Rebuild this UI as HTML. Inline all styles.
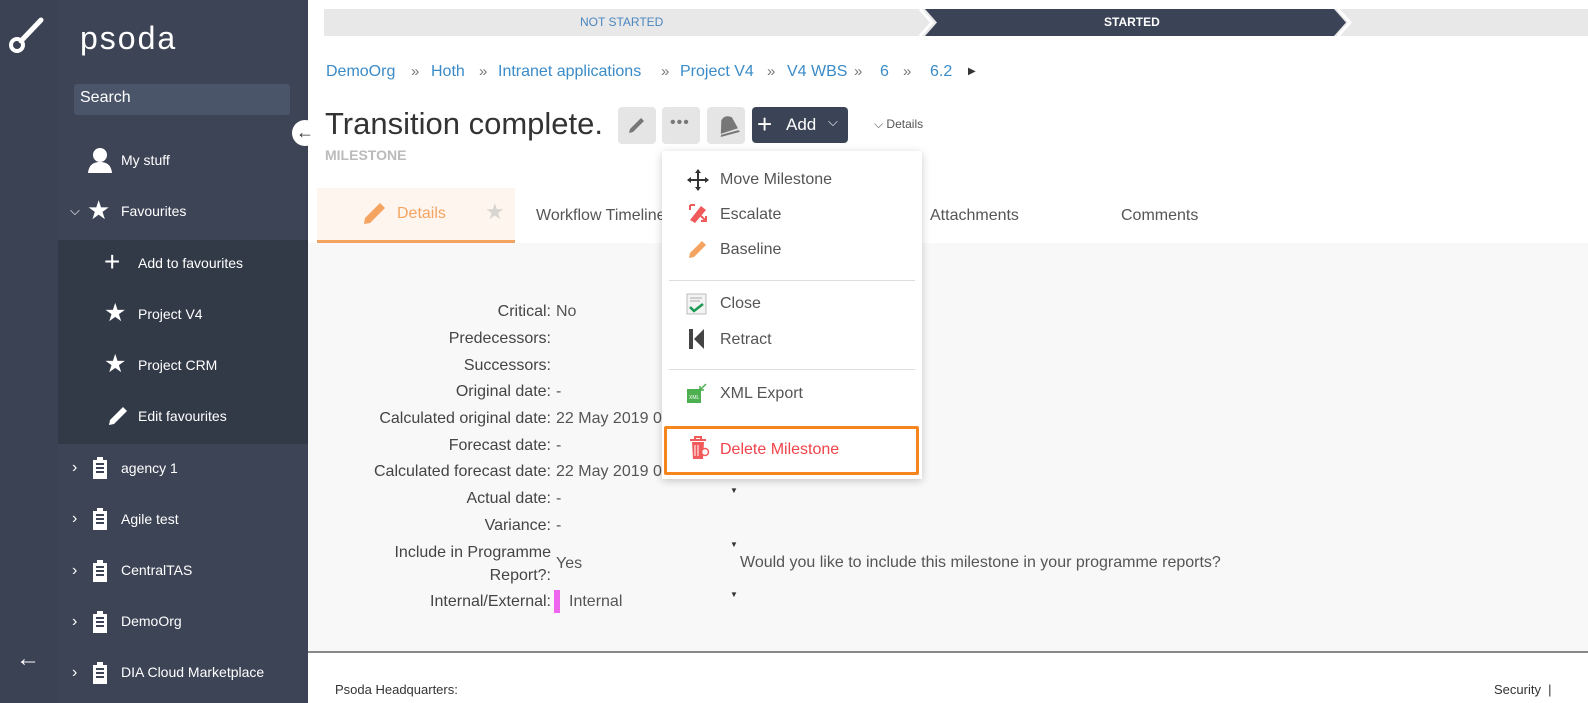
<!DOCTYPE html>
<html><head><meta charset="utf-8"><style>
*{margin:0;padding:0;box-sizing:border-box}
body{width:1588px;height:703px;overflow:hidden;position:relative;background:#fff;font-family:"Liberation Sans",sans-serif;color:#444}
.a{position:absolute;white-space:nowrap}
#strip{left:0;top:0;width:58px;height:703px;background:#3b4253}
#nav{left:58px;top:0;width:250px;height:703px;background:#3d4456}
#fav{left:58px;top:240px;width:250px;height:204px;background:#333a47}
.ni{color:#fff;font-size:14px}
.ico{fill:#fff}
#content{left:308px;top:243px;width:1280px;height:410px;background:#f8f8f8;border-bottom:2px solid #888}
.lbl{font-size:16px;color:#444;text-align:right;width:300px;left:251px}
.val{font-size:16px;color:#555;left:556px}
.mi{font-size:16px;color:#555;left:720px}
.crumb{color:#3a8bc8;font-size:16px;top:63px}
.sep{color:#777;font-size:15px;top:63px}
.btn{top:107px;width:38px;height:37px;background:#e5e5e5;border-radius:4px}
</style></head><body>
<div class="a" id="strip"></div>
<div class="a" id="nav"></div>
<div class="a" id="fav"></div>
<svg class="a" style="left:8px;top:12px" width="40" height="42" viewBox="0 0 40 42"><circle cx="9" cy="33" r="6" fill="none" stroke="#fff" stroke-width="4"/><line x1="13" y1="29" x2="33" y2="8" stroke="#fff" stroke-width="5" stroke-linecap="round"/><circle cx="9" cy="33" r="2" fill="#3b4253"/></svg>
<div class="a" style="left:80px;top:20px;color:#fff;font-size:32px;letter-spacing:2px;font-weight:300">psoda</div>
<div class="a" style="left:74px;top:84px;width:216px;height:31px;background:#4b5569;border-radius:3px;color:#fff;font-size:16px;padding:5px 6px">Search</div>
<div class="a" style="left:292px;top:120px;width:26px;height:26px;border-radius:13px;background:#fff;color:#333;font-size:18px;line-height:24px;text-align:center">←</div>
<svg class="a" style="left:88px;top:147px" width="24" height="26" viewBox="0 0 24 26"><circle cx="12" cy="8" r="7" class="ico"/><path d="M0 26 Q1 15 12 15 Q23 15 24 26Z" class="ico"/></svg>
<div class="a ni" style="left:121px;top:152px">My stuff</div>
<div class="a ni" style="left:70px;top:203px;font-size:13px">⌵</div>
<div class="a" style="left:87px;top:195px;color:#fff;font-size:26px">★</div>
<div class="a ni" style="left:121px;top:203px">Favourites</div>
<div class="a" style="left:104px;top:246px;color:#fff;font-size:28px">+</div>
<div class="a ni" style="left:138px;top:255px">Add to favourites</div>
<div class="a" style="left:104px;top:298px;color:#fff;font-size:25px">★</div>
<div class="a ni" style="left:138px;top:306px">Project V4</div>
<div class="a" style="left:104px;top:349px;color:#fff;font-size:25px">★</div>
<div class="a ni" style="left:138px;top:357px">Project CRM</div>
<svg class="a" style="left:106px;top:404px" width="24" height="24" viewBox="0 0 24 24"><path d="M3 21 L4 16 L17 3 L21 7 L8 20Z" class="ico"/></svg>
<div class="a ni" style="left:138px;top:408px">Edit favourites</div>
<div class="a" style="left:16px;top:645px;color:#fff;font-size:24px">←</div>
<div class="a ni" style="left:72px;top:459px;font-size:16px">›</div>
<svg class="a" style="left:92px;top:457px" width="16" height="22" viewBox="0 0 16 22"><rect x="1" y="3" width="14" height="19" class="ico"/><rect x="5" y="0" width="6" height="3" class="ico"/><g fill="#3d4456"><rect x="4" y="6" width="8" height="2"/><rect x="4" y="10" width="8" height="2"/><rect x="4" y="14" width="8" height="2"/></g></svg>
<div class="a ni" style="left:121px;top:460px">agency 1</div>
<div class="a ni" style="left:72px;top:510px;font-size:16px">›</div>
<svg class="a" style="left:92px;top:508px" width="16" height="22" viewBox="0 0 16 22"><rect x="1" y="3" width="14" height="19" class="ico"/><rect x="5" y="0" width="6" height="3" class="ico"/><g fill="#3d4456"><rect x="4" y="6" width="8" height="2"/><rect x="4" y="10" width="8" height="2"/><rect x="4" y="14" width="8" height="2"/></g></svg>
<div class="a ni" style="left:121px;top:511px">Agile test</div>
<div class="a ni" style="left:72px;top:562px;font-size:16px">›</div>
<svg class="a" style="left:92px;top:560px" width="16" height="22" viewBox="0 0 16 22"><rect x="1" y="3" width="14" height="19" class="ico"/><rect x="5" y="0" width="6" height="3" class="ico"/><g fill="#3d4456"><rect x="4" y="6" width="8" height="2"/><rect x="4" y="10" width="8" height="2"/><rect x="4" y="14" width="8" height="2"/></g></svg>
<div class="a ni" style="left:121px;top:562px">CentralTAS</div>
<div class="a ni" style="left:72px;top:613px;font-size:16px">›</div>
<svg class="a" style="left:92px;top:611px" width="16" height="22" viewBox="0 0 16 22"><rect x="1" y="3" width="14" height="19" class="ico"/><rect x="5" y="0" width="6" height="3" class="ico"/><g fill="#3d4456"><rect x="4" y="6" width="8" height="2"/><rect x="4" y="10" width="8" height="2"/><rect x="4" y="14" width="8" height="2"/></g></svg>
<div class="a ni" style="left:121px;top:613px">DemoOrg</div>
<div class="a ni" style="left:72px;top:664px;font-size:16px">›</div>
<svg class="a" style="left:92px;top:662px" width="16" height="22" viewBox="0 0 16 22"><rect x="1" y="3" width="14" height="19" class="ico"/><rect x="5" y="0" width="6" height="3" class="ico"/><g fill="#3d4456"><rect x="4" y="6" width="8" height="2"/><rect x="4" y="10" width="8" height="2"/><rect x="4" y="14" width="8" height="2"/></g></svg>
<div class="a ni" style="left:121px;top:664px">DIA Cloud Marketplace</div>

<svg class="a" style="left:324px;top:9px" width="1264" height="27" viewBox="0 0 1264 27">
<rect x="0" y="0" width="1264" height="27" fill="#e8e8e8"/>
<polygon points="601,0 1010,0 1022,13.5 1010,27 601,27 613,13.5" fill="#3b4356"/>
<polyline points="596,0 608,13.5 596,27" fill="none" stroke="#fff" stroke-width="3"/>
<polyline points="1014,0 1026,13.5 1014,27" fill="none" stroke="#fff" stroke-width="3"/>
</svg>
<div class="a" style="left:580px;top:15px;font-size:12px;color:#4a86c0">NOT STARTED</div>
<div class="a" style="left:1104px;top:15px;font-size:12px;color:#fff;font-weight:bold">STARTED</div>

<div class="a crumb" style="left:326px">DemoOrg</div><div class="a sep" style="left:411px">»</div>
<div class="a crumb" style="left:431px">Hoth</div><div class="a sep" style="left:479px">»</div>
<div class="a crumb" style="left:498px">Intranet applications</div><div class="a sep" style="left:661px">»</div>
<div class="a crumb" style="left:680px">Project V4</div><div class="a sep" style="left:767px">»</div>
<div class="a crumb" style="left:787px">V4 WBS</div><div class="a sep" style="left:854px">»</div>
<div class="a crumb" style="left:880px">6</div><div class="a sep" style="left:903px">»</div>
<div class="a crumb" style="left:930px">6.2</div>
<div class="a" style="left:968px;top:66px;font-size:10px;color:#333">▶</div>

<div class="a" style="left:325px;top:106px;font-size:31px;color:#333">Transition complete.</div>
<div class="a" style="left:325px;top:147px;font-size:14px;color:#bbb;font-weight:bold">MILESTONE</div>
<div class="a btn" style="left:618px"></div>
<svg class="a" style="left:627px;top:115px" width="20" height="20" viewBox="0 0 20 20"><path d="M2 18 L3 14 L14 3 L17 6 L6 17Z" fill="#777"/></svg>
<div class="a btn" style="left:662px"></div>
<div class="a" style="left:670px;top:114px;font-size:16px;color:#777;letter-spacing:1px">•••</div>
<div class="a btn" style="left:707px"></div>
<svg class="a" style="left:713px;top:112px" width="28" height="28" viewBox="0 0 28 28"><path d="M6 20 L10 7 Q15 2 21 7 L24 19Z M6 21 L24 21 L25 23 L5 23Z" fill="#777" transform="rotate(-15 14 14)"/></svg>
<div class="a" style="left:752px;top:107px;width:96px;height:36px;background:#3b4356;border-radius:4px"></div>
<div class="a" style="left:757px;top:109px;font-size:26px;color:#fff">+</div>
<div class="a" style="left:786px;top:115px;font-size:17px;color:#fff">Add</div>
<div class="a" style="left:828px;top:114px;font-size:13px;color:#fff">⌵</div>
<div class="a" style="left:874px;top:117px;font-size:12px;color:#555">⌵ Details</div>

<div class="a" style="left:308px;top:185px;width:1280px;height:58px;background:#fff;box-shadow:0 2px 3px rgba(0,0,0,.12)"></div>
<div class="a" style="left:317px;top:188px;width:198px;height:55px;background:#fff5ef;border-bottom:3px solid #f4a460"></div>
<svg class="a" style="left:362px;top:200px" width="26" height="26" viewBox="0 0 26 26"><path d="M2 24 L3 18 L18 3 L23 8 L8 23Z" fill="#f4a460"/></svg>
<div class="a" style="left:397px;top:205px;font-size:16px;color:#f4a460">Details</div>
<div class="a" style="left:485px;top:199px;font-size:22px;color:#d8d4d0">★</div>
<div class="a" style="left:536px;top:207px;font-size:16px;color:#555">Workflow Timeline</div>
<div class="a" style="left:930px;top:207px;font-size:16px;color:#555">Attachments</div>
<div class="a" style="left:1121px;top:207px;font-size:16px;color:#555">Comments</div>

<div class="a" id="content"></div>
<div class="a lbl" style="top:303px">Critical:</div><div class="a val" style="top:303px">No</div>
<div class="a lbl" style="top:330px">Predecessors:</div>
<div class="a lbl" style="top:357px">Successors:</div>
<div class="a lbl" style="top:383px">Original date:</div><div class="a val" style="top:383px">-</div>
<div class="a lbl" style="top:410px">Calculated original date:</div><div class="a val" style="top:410px">22 May 2019 0</div>
<div class="a lbl" style="top:437px">Forecast date:</div><div class="a val" style="top:437px">-</div>
<div class="a lbl" style="top:463px">Calculated forecast date:</div><div class="a val" style="top:463px">22 May 2019 0</div>
<div class="a lbl" style="top:490px">Actual date:</div><div class="a val" style="top:490px">-</div>
<div class="a lbl" style="top:517px">Variance:</div><div class="a val" style="top:517px">-</div>
<div class="a lbl" style="top:544px">Include in Programme</div>
<div class="a lbl" style="top:567px">Report?:</div><div class="a val" style="top:555px">Yes</div>
<div class="a lbl" style="top:593px">Internal/External:</div>
<div class="a" style="left:554px;top:590px;width:6px;height:23px;background:#ee66ee"></div>
<div class="a val" style="left:569px;top:593px">Internal</div>
<div class="a" style="left:730px;top:486px;font-size:8px;color:#333">▼</div>
<div class="a" style="left:730px;top:540px;font-size:8px;color:#333">▼</div>
<div class="a" style="left:740px;top:554px;font-size:16px;color:#555">Would you like to include this milestone in your programme reports?</div>
<div class="a" style="left:730px;top:590px;font-size:8px;color:#333">▼</div>

<div class="a" style="left:335px;top:682px;font-size:13px;color:#333">Psoda Headquarters:</div>
<div class="a" style="left:1494px;top:682px;font-size:13px;color:#333">Security &nbsp;|</div>

<div class="a" style="left:662px;top:151px;width:260px;height:328px;background:#fff;box-shadow:0 2px 8px rgba(0,0,0,.2)"></div>
<svg class="a" style="left:686px;top:168px" width="24" height="24" viewBox="0 0 24 24"><path d="M12 2 V22 M2 12 H22" stroke="#333" stroke-width="2"/><path d="M12 1 L9 5 H15Z M12 23 L9 19 H15Z M1 12 L5 9 V15Z M23 12 L19 9 V15Z" fill="#333"/></svg>
<div class="a mi" style="top:171px">Move Milestone</div>
<svg class="a" style="left:687px;top:202px" width="22" height="22" viewBox="0 0 22 22"><path d="M3 18 L14 4 L19 8 L8 21Z" fill="#f05a5a"/><path d="M3 3 L8 3 M3 3 L3 8 M14 14 L19 19 M19 14 V19 H14" stroke="#f05a5a" stroke-width="2" fill="none"/></svg>
<div class="a mi" style="top:206px">Escalate</div>
<svg class="a" style="left:687px;top:238px" width="22" height="22" viewBox="0 0 22 22"><path d="M2 20 L3 15 L15 3 L19 7 L7 19Z" fill="#f4a460"/></svg>
<div class="a mi" style="top:241px">Baseline</div>
<div class="a" style="left:669px;top:280px;width:246px;height:1px;background:#ddd"></div>
<svg class="a" style="left:686px;top:293px" width="22" height="22" viewBox="0 0 22 22"><rect x="1" y="1" width="19" height="20" fill="#f3f3f3" stroke="#bbb"/><path d="M4 5 H16 M4 8 H14" stroke="#aaa"/><path d="M4 14 L8 18 L17 11" stroke="#1a9a50" stroke-width="2.5" fill="none"/></svg>
<div class="a mi" style="top:295px">Close</div>
<svg class="a" style="left:688px;top:328px" width="18" height="22" viewBox="0 0 18 22"><rect x="1" y="1" width="4" height="20" fill="#444"/><path d="M16 1 L6 11 L16 21Z" fill="#444"/></svg>
<div class="a mi" style="top:331px">Retract</div>
<div class="a" style="left:669px;top:369px;width:246px;height:1px;background:#ddd"></div>
<svg class="a" style="left:686px;top:383px" width="22" height="22" viewBox="0 0 22 22"><rect x="1" y="6" width="14" height="14" fill="#4caf50"/><text x="3" y="16" font-size="5" fill="#fff" font-family="Liberation Sans">XML</text><path d="M20 1 L14 7 M14 3 V7 H18" stroke="#4caf50" stroke-width="1.5" fill="none"/></svg>
<div class="a mi" style="top:385px">XML Export</div>
<div class="a" style="left:664px;top:426px;width:255px;height:49px;border:3px solid #f7851d;border-radius:2px"></div>
<svg class="a" style="left:688px;top:436px" width="22" height="24" viewBox="0 0 22 24"><path d="M2 4 H18 M7 4 V1 H13 V4" stroke="#f05a5a" stroke-width="2" fill="none"/><path d="M4 6 H16 L15 23 H5Z" fill="#f05a5a"/><path d="M7 9 V20 M10 9 V20" stroke="#fff"/><circle cx="17" cy="16" r="3.5" fill="#fff" stroke="#f05a5a" stroke-width="1.5"/></svg>
<div class="a mi" style="top:441px;color:#f0434a">Delete Milestone</div>
</body></html>
